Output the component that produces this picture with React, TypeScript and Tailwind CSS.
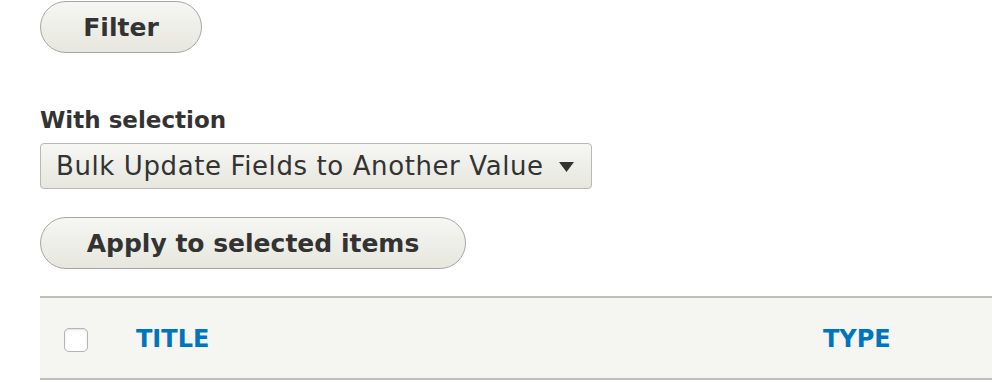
import React from "react";

export default function App() {
  const font = { fontFamily: '"DejaVu Sans", "Liberation Sans", sans-serif' };
  return (
    <div className="bg-white w-[992px] h-[382px] overflow-hidden text-[#333]" style={font}>
      <div className="pt-[1px] pl-[40px] flex flex-col">
        <div className="w-[162px] h-[52px] rounded-full border border-[#a6a6a6] bg-gradient-to-b from-[#f6f6f3] to-[#e7e7df] flex items-center justify-center text-[25px] font-bold leading-none text-[#333]">
          Filter
        </div>
        <div className="mt-[53px] h-[28px] leading-[28px] text-[23px] font-bold text-[#333]">
          With selection
        </div>
        <div className="mt-[9px] w-[552px] h-[46px] rounded-[4px] border border-[#b8b8b8] bg-gradient-to-b from-[#f6f6f3] to-[#e7e7df] flex items-center justify-between pl-[15px] pr-[17px]">
          <span className="text-[26px] tracking-[0.6px] leading-none text-[#333]">Bulk Update Fields to Another Value</span>
          <svg width="15" height="10" viewBox="0 0 15 10" className="mt-[2px]">
            <polygon points="0,0 15,0 7.5,10" fill="#333" />
          </svg>
        </div>
        <div className="mt-[28px] w-[426px] h-[52px] rounded-full border border-[#a6a6a6] bg-gradient-to-b from-[#f6f6f3] to-[#e7e7df] flex items-center justify-center text-[25px] font-bold leading-none text-[#333]">
          Apply to selected items
        </div>
        <div className="mt-[27px] h-[84px] border-t-2 border-b-2 border-[#bfbfba] bg-[#f5f5f2] flex items-center">
          <div className="w-[96px] flex items-center pl-[24px]">
            <div className="w-[24px] h-[24px] rounded-[5px] border border-[#b4b4b4] bg-white shadow-[inset_0_1px_2px_rgba(0,0,0,0.12)] mt-[4px]" />
          </div>
          <div className="w-[687px] text-[24px] font-bold text-[#0074bd] leading-none mt-[2px]">TITLE</div>
          <div className="text-[24px] font-bold text-[#0074bd] leading-none mt-[2px]">TYPE</div>
        </div>
      </div>
    </div>
  );
}
